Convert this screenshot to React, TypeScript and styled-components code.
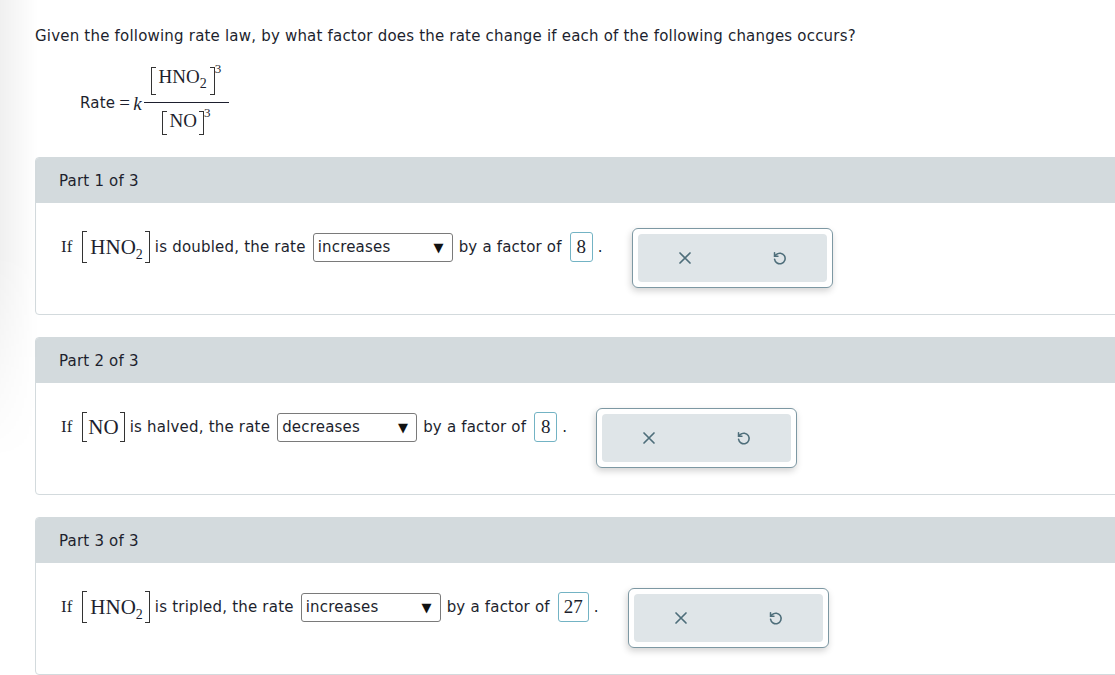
import React from "react";
import styled, { createGlobalStyle } from "styled-components";

const Global = createGlobalStyle`
  html, body { margin: 0; padding: 0; background: #ffffff; overflow: hidden; }
  body {
    font-family: "DejaVu Sans", Verdana, sans-serif;
    letter-spacing: 0.2px;
    color: #1d1f2e;
    width: 1115px;
    height: 675px;
  }
  body::before {
    content: "";
    position: fixed;
    left: 0;
    top: 0;
    width: 38px;
    height: 460px;
    background: linear-gradient(to right, rgba(0,0,0,0.06), rgba(0,0,0,0));
    -webkit-mask-image: linear-gradient(to bottom, #000 55%, transparent);
    mask-image: linear-gradient(to bottom, #000 55%, transparent);
    pointer-events: none;
  }
`;

const Page = styled.div`
  padding: 27px 0 0 35px;
`;

const Title = styled.div`
  font-size: 15px;
  line-height: 18px;
`;

const FormulaRow = styled.div`
  display: flex;
  align-items: center;
  margin: 18px 0 14px 45px;
  height: 80px;
  font-size: 15px;
`;

const Serif = styled.span<{ $size?: number; $italic?: boolean }>`
  font-family: "Liberation Serif", "Times New Roman", serif;
  font-size: ${(p) => p.$size ?? 20}px;
  font-style: ${(p) => (p.$italic ? "italic" : "normal")};
  letter-spacing: 0;
  line-height: 1;
`;

const Eq = styled.span`
  font-family: "Liberation Serif", serif;
  font-size: 19px;
  margin: 0 3px 0 4px;
`;

const Fraction = styled.span`
  display: inline-flex;
  flex-direction: column;
  align-items: center;
  margin: 0 0 4px 2px;
`;

const Numer = styled.span`
  display: inline-flex;
  align-items: flex-start;
  padding: 0 8px 7px 7px;
`;

const Denom = styled.span`
  display: inline-flex;
  align-items: flex-start;
  border-top: 1px solid #1d1f2e;
  padding: 8px 6px 0 6px;
  align-self: stretch;
  justify-content: center;
`;

const Group = styled.span`
  display: inline-flex;
  align-items: center;
`;

const Bracket = styled.span<{ $side: "l" | "r"; $h: number; $gap?: number }>`
  display: inline-block;
  width: 4px;
  height: ${(p) => p.$h}px;
  border: 1.2px solid #333;
  ${(p) => (p.$side === "l" ? "border-right: none;" : "border-left: none;")}
  margin: ${(p) =>
    p.$side === "l" ? `0 ${p.$gap ?? 3}px 0 0` : `0 0 0 ${p.$gap ?? 3}px`};
`;

const Sub = styled.sub`
  font-size: 14px;
  vertical-align: -5px;
  line-height: 0;
`;

const Sup = styled.span`
  font-family: "Liberation Serif", serif;
  font-size: 13px;
  line-height: 1;
  margin-top: -5px;
`;

const PartBox = styled.section<{ $first?: boolean }>`
  width: 1100px;
  height: 156px;
  border: 1px solid #d3dadd;
  border-radius: 4px;
  margin-top: ${(p) => (p.$first ? "0" : "22px")};
  overflow: hidden;
`;

const PartHeader = styled.div`
  height: 45px;
  background: #d3dadd;
  display: flex;
  align-items: center;
  padding-left: 23px;
  font-size: 15px;
`;

const PartBody = styled.div`
  padding: 25px 0 0 25px;
  display: flex;
  align-items: flex-start;
`;

const Sentence = styled.div`
  display: flex;
  align-items: center;
  height: 38px;
  font-size: 15px;
  white-space: pre;
`;

const IfWord = styled.span`
  font-family: "Liberation Serif", serif;
  font-size: 17px;
  letter-spacing: 0;
  margin-right: 10px;
`;

const Phrase = styled.span`
  margin-left: 5px;
`;

const Select = styled.span`
  display: inline-flex;
  align-items: center;
  justify-content: space-between;
  box-sizing: border-box;
  width: 140px;
  height: 29px;
  border: 1px solid #7a7a7a;
  border-radius: 3px;
  padding: 0 8px 0 4px;
  margin: 0 6px 0 7px;
  font-size: 15px;
  background: #fff;
`;

const Arrow = styled.span`
  font-size: 13px;
  color: #111;
`;

const Answer = styled.span`
  display: inline-flex;
  align-items: center;
  justify-content: center;
  box-sizing: border-box;
  min-width: 23px;
  height: 30px;
  padding: 0 5px;
  border: 1px solid #73b3c4;
  border-radius: 3px;
  margin: 0 5px 0 8px;
  font-family: "Liberation Serif", serif;
  letter-spacing: 0;
  font-size: 19px;
`;

const Tools = styled.div`
  margin-left: 29px;
  box-sizing: border-box;
  width: 201px;
  height: 60px;
  border: 1px solid #7d98a3;
  border-radius: 6px;
  padding: 5px;
  background: #fff;
  box-shadow: -1px 3px 7px rgba(0, 0, 0, 0.18);
`;

const ToolsInner = styled.div`
  height: 100%;
  border-radius: 4px;
  background: #dfe5e8;
  display: grid;
  grid-template-columns: 1fr 1fr;
  align-items: center;
  justify-items: center;
`;

const IconBtn = styled.span`
  display: flex;
  color: #4e6e7a;
`;

const XIcon = () => (
  <svg width="14" height="14" viewBox="0 0 14 14" fill="none" stroke="currentColor" strokeWidth="1.7" strokeLinecap="round">
    <path d="M2 2 L12 12 M12 2 L2 12" />
  </svg>
);

const UndoIcon = () => (
  <svg width="17" height="17" viewBox="0 0 24 24" fill="none" stroke="currentColor" strokeWidth="2.2" strokeLinecap="round" strokeLinejoin="round">
    <path d="M5 13a7.5 7.5 0 1 0 2.3-6.5L5 8.8" />
    <path d="M5 4v4.8h4.8" />
  </svg>
);

const Chem = ({ no2, h = 29 }: { no2: boolean; h?: number }) => (
  <Group>
    <Bracket $side="l" $h={h} $gap={no2 ? 3 : 1} />
    <Serif $size={21}>
      {no2 ? (
        <>
          HNO<Sub>2</Sub>
        </>
      ) : (
        "NO"
      )}
    </Serif>
    <Bracket $side="r" $h={h} $gap={no2 ? 2 : 1} />
  </Group>
);

type PartProps = {
  n: number;
  chem: boolean;
  verb: string;
  dir: string;
  factor: string;
  first?: boolean;
};

const Part = ({ n, chem, verb, dir, factor, first }: PartProps) => (
  <PartBox $first={first}>
    <PartHeader>Part {n} of 3</PartHeader>
    <PartBody>
      <Sentence>
        <IfWord>If</IfWord>
        {chem ? <Chem no2 h={30} /> : <Chem no2={false} h={28} />}
        <Phrase>is {verb}, the rate</Phrase>
        <Select>
          <span>{dir}</span>
          <Arrow>▼</Arrow>
        </Select>
        <span>by a factor of</span>
        <Answer>{factor}</Answer>
        <span>.</span>
      </Sentence>
      <Tools>
        <ToolsInner>
          <IconBtn>
            <XIcon />
          </IconBtn>
          <IconBtn>
            <UndoIcon />
          </IconBtn>
        </ToolsInner>
      </Tools>
    </PartBody>
  </PartBox>
);

export default function App() {
  return (
    <>
      <Global />
      <Page>
        <Title>Given the following rate law, by what factor does the rate change if each of the following changes occurs?</Title>
        <FormulaRow>
          <span>Rate</span>
          <Eq>=</Eq>
          <Serif $size={19} $italic>
            k
          </Serif>
          <Fraction>
            <Numer>
              <Bracket $side="l" $h={26} />
              <Serif $size={19}>
                HNO<Sub>2</Sub>
              </Serif>
              <Bracket $side="r" $h={26} />
              <Sup>3</Sup>
            </Numer>
            <Denom>
              <Bracket $side="l" $h={22} $gap={2} />
              <Serif $size={19}>NO</Serif>
              <Bracket $side="r" $h={22} $gap={2} />
              <Sup>3</Sup>
            </Denom>
          </Fraction>
        </FormulaRow>
        <Part n={1} chem verb="doubled" dir="increases" factor="8" first />
        <Part n={2} chem={false} verb="halved" dir="decreases" factor="8" />
        <Part n={3} chem verb="tripled" dir="increases" factor="27" />
      </Page>
    </>
  );
}
